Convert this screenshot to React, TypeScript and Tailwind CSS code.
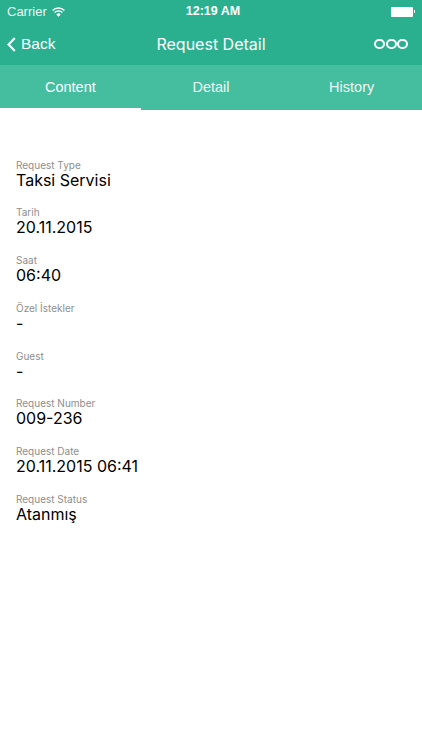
const fields = [
  { label: "Request Type", value: "Taksi Servisi" },
  { label: "Tarih", value: "20.11.2015" },
  { label: "Saat", value: "06:40" },
  { label: "Özel İstekler", value: "-" },
  { label: "Guest", value: "-" },
  { label: "Request Number", value: "009-236" },
  { label: "Request Date", value: "20.11.2015 06:41" },
  { label: "Request Status", value: "Atanmış" },
];

const tabs = ["Content", "Detail", "History"];

function StatusBar() {
  return (
    <div className="relative flex h-[23px] items-center justify-between pl-[7px] pr-[7px] font-['Liberation_Sans',sans-serif] text-[13px] text-white">
      <div className="flex items-center gap-[5px]">
        <span className="opacity-90">Carrier</span>
        {/* wifi */}
        <svg width="13" height="10" viewBox="0 0 13 10" fill="none" stroke="white" strokeWidth="1.5">
          <path d="M0.6 3.6 A8.2 8.2 0 0 1 12.4 3.6" />
          <path d="M2.6 5.6 A5.4 5.4 0 0 1 10.4 5.6" />
          <path d="M6.5 9.8 L4.3 7.4 A3 3 0 0 1 8.7 7.4 Z" fill="white" stroke="none" />
        </svg>
      </div>
      <span className="absolute left-[4px] right-0 text-center text-[12.5px] font-bold">12:19 AM</span>
      <div className="flex items-center">
        <div className="h-[10px] w-[22px] rounded-[1px] bg-white" />
        <div className="ml-[1px] h-[3px] w-[1px] bg-white" />
      </div>
    </div>
  );
}

function NavBar() {
  return (
    <div className="relative flex h-[42px] items-center justify-between pl-[7px] pr-[14px]">
      <div className="flex items-center gap-[5px]">
        <svg width="9" height="15" viewBox="0 0 9 15" fill="none" stroke="white" strokeWidth="2.2">
          <path d="M7.8 1 L1.6 7.5 L7.8 14" />
        </svg>
        <span className="font-['Liberation_Sans',sans-serif] text-[15.5px] text-white">Back</span>
      </div>
      <span className="absolute left-0 right-0 text-center text-[16px] text-white">Request Detail</span>
      <div className="flex items-center gap-[0.5px]">
        <div className="h-[9.5px] w-[11px] rounded-full border-2 border-white" />
        <div className="h-[9.5px] w-[11px] rounded-full border-2 border-white" />
        <div className="h-[9.5px] w-[11px] rounded-full border-2 border-white" />
      </div>
    </div>
  );
}

function Tabs() {
  return (
    <div className="flex h-[45px] bg-[#45be9f] font-['Liberation_Sans',sans-serif]">
      {tabs.map((tab, i) => (
        <div key={tab} className={`flex flex-1 items-center justify-center pt-[2px] text-[14.5px] text-white ${i === 0 ? "border-b-[2px] border-white" : "border-b-[2px] border-transparent opacity-90"}`}>
          {tab}
        </div>
      ))}
    </div>
  );
}

export default function App() {
  return (
    <div className="h-[750px] w-[422px] overflow-hidden bg-white font-['Inter','Liberation_Sans',sans-serif]">
      <div className="bg-[#2ab08f]">
        <StatusBar />
        <NavBar />
      </div>
      <Tabs />
      <div className="flex flex-col gap-[10.75px] pl-[16px] pt-[48px]">
        {fields.map((field) => (
          <div key={field.label} className="flex h-[37px] flex-col pt-[0.5px]">
            <span className="h-[12px] text-[10px] leading-[12px] text-[#8e8e8e]">{field.label}</span>
            <span className="mt-[2px] h-[15px] text-[16px] leading-[15px] text-black">{field.value}</span>
          </div>
        ))}
      </div>
    </div>
  );
}
